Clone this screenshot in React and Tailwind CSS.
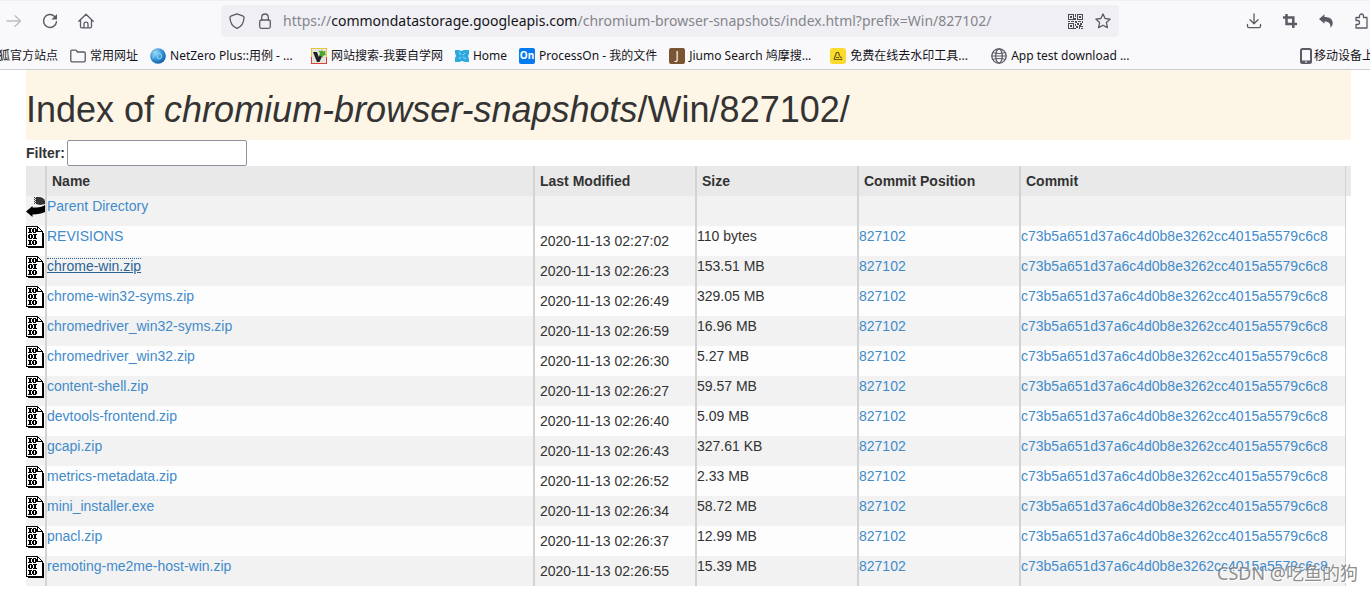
const COMMIT = "c73b5a651d37a6c4d0b8e3262cc4015a5579c6c8";
const POSITION = "827102";

const files = [
  { name: "REVISIONS", modified: "2020-11-13 02:27:02", size: "110 bytes" },
  { name: "chrome-win.zip", modified: "2020-11-13 02:26:23", size: "153.51 MB", active: true },
  { name: "chrome-win32-syms.zip", modified: "2020-11-13 02:26:49", size: "329.05 MB" },
  { name: "chromedriver_win32-syms.zip", modified: "2020-11-13 02:26:59", size: "16.96 MB" },
  { name: "chromedriver_win32.zip", modified: "2020-11-13 02:26:30", size: "5.27 MB" },
  { name: "content-shell.zip", modified: "2020-11-13 02:26:27", size: "59.57 MB" },
  { name: "devtools-frontend.zip", modified: "2020-11-13 02:26:40", size: "5.09 MB" },
  { name: "gcapi.zip", modified: "2020-11-13 02:26:43", size: "327.61 KB" },
  { name: "metrics-metadata.zip", modified: "2020-11-13 02:26:52", size: "2.33 MB" },
  { name: "mini_installer.exe", modified: "2020-11-13 02:26:34", size: "58.72 MB" },
  { name: "pnacl.zip", modified: "2020-11-13 02:26:37", size: "12.99 MB" },
  { name: "remoting-me2me-host-win.zip", modified: "2020-11-13 02:26:55", size: "15.39 MB" },
];

/* ---- icons ---- */

// 16px outline icon in the toolbar grey
function LineIcon({ children, color = "#5b5b66" }) {
  return (
    <svg width="16" height="16" viewBox="0 0 16 16" fill="none" stroke={color} strokeWidth="1.3" strokeLinecap="round" strokeLinejoin="round">
      {children}
    </svg>
  );
}

function ForwardIcon() {
  return <LineIcon color="#bcbcc2"><path d="M1 8h13.5M9 2.8 14.5 8 9 13.2" /></LineIcon>;
}

function HomeIcon() {
  return (
    <LineIcon>
      <path d="M.8 8.2 8 1.2l7.2 7M2.5 6.8v6.7c0 .9.5 1.4 1.4 1.4h8.2c.9 0 1.4-.5 1.4-1.4V6.8M6 14.7v-3.5a2 2 0 0 1 4 0v3.5" />
    </LineIcon>
  );
}

function DownloadIcon() {
  return (
    <LineIcon>
      <path d="M8 .8v9.7M4 6.7l4 4 4-4M1.5 11.5v1.8c0 .8.5 1.3 1.3 1.3h10.4c.8 0 1.3-.5 1.3-1.3v-1.8" />
    </LineIcon>
  );
}

function FolderIcon() {
  return (
    <LineIcon>
      <path d="M.8 3.2c0-.7.4-1.1 1.1-1.1h3.6c.4 0 .7.1.9.4L7.5 4h6.6c.7 0 1.1.4 1.1 1.1v7.6c0 .7-.4 1.1-1.1 1.1H1.9c-.7 0-1.1-.4-1.1-1.1z" />
    </LineIcon>
  );
}

function GlobeIcon() {
  return (
    <LineIcon>
      <circle cx="8" cy="8" r="7.2" />
      <ellipse cx="8" cy="8" rx="3.3" ry="7.2" />
      <path d="M1 8h14M2 4.7c3.5 1 8.500 1 12 0M2 11.3c3.5-1 8.500-1 12 0" strokeWidth="1" />
    </LineIcon>
  );
}

function ShieldIcon() {
  return (
    <LineIcon>
      <path d="M8 .8 14.2 3.2c.6.2.8.6.8 1.2-.1 5-2.3 9-7 11-4.7-2-6.9-6-7-11 0-.6.2-1 .8-1.2z" />
    </LineIcon>
  );
}

function LockIcon() {
  return (
    <LineIcon>
      <rect x="2.7" y="7" width="10.6" height="8.3" rx="1.5" />
      <path d="M4.7 7V4.3a3.3 3.3 0 0 1 6.6 0V7" />
    </LineIcon>
  );
}

function StarIcon() {
  return (
    <LineIcon>
      <path d="m8 .9 2.1 4.6 5.1.6-3.8 3.5 1 5L8 12.2l-4.4 2.4 1-5L.8 6.1l5.1-.6z" />
    </LineIcon>
  );
}

function PuzzleIcon() {
  return (
    <LineIcon>
      <path d="M2 4.5h3.5V3a2 2 0 0 1 4 0v1.5H13V15H2v-3.5h1.5a2 2 0 0 0 0-4H2z" />
    </LineIcon>
  );
}

function ReloadIcon() {
  return (
    <svg width="16" height="16" viewBox="0 0 16 16" fill="none">
      <path d="M12.6 3.4A6.5 6.5 0 1 0 14.5 8.6" stroke="#5b5b66" strokeWidth="1.4" strokeLinecap="round" />
      <path d="M15 1v5.6H9.4z" fill="#5b5b66" />
    </svg>
  );
}

function QrIcon() {
  return (
    <svg width="15" height="15" viewBox="0 0 15 15" fill="#4a4a55" shapeRendering="crispEdges">
      <path fillRule="evenodd" d="M0 0h6v6H0zM1 1v4h4V1zM9 0h6v6H9zM10 1v4h4V1zM0 9h6v6H0zM1 10v4h4v-4z" />
      <path d="M2 2h2v2H2zM11 2h2v2h-2zM2 11h2v2H2zM7 0h1v3H7zM6 4h2v2H6zM0 7h2v1H0zM3 7h3v1H3zM7 7h2v2H7zM10 7h3v1h-3zM14 7h1v2h-1zM7 10h1v2H7zM9 9h2v2H9zM12 9h2v2h-2zM11 11h2v2h-2zM8 12h2v2H8zM11 13h1v2h-1zM13 12h2v1h-2zM13 14h2v1h-2zM6 14h2v1H6z" />
    </svg>
  );
}

function CropIcon() {
  return (
    <svg width="14" height="14" viewBox="0 0 14 14" fill="none" stroke="#5b5b66" strokeWidth="2.5">
      <path d="M3.5 0v10H14M0 3.5h10.3V14" />
    </svg>
  );
}

function UndoIcon() {
  return (
    <svg width="14" height="14" viewBox="0 0 14 14" fill="#5b5b66">
      <path d="M0 5 5.5.3V3C10.5 3 13.7 5 13.7 9c0 2-.9 3.6-2.4 4.7C12 10 10 7.5 5.5 7.5v2.3z" />
    </svg>
  );
}

function SwirlIcon() {
  return (
    <svg width="16" height="16" viewBox="0 0 16 16">
      <defs>
        <radialGradient id="swirl" cx="35%" cy="30%" r="75%">
          <stop offset="0" stopColor="#a9dcf5" />
          <stop offset="0.5" stopColor="#3d9bd8" />
          <stop offset="1" stopColor="#0f5ba8" />
        </radialGradient>
      </defs>
      <circle cx="8" cy="8" r="7.8" fill="url(#swirl)" />
      <path d="M3 10c0-4 4-6 7-4.5 2.5 1.3 2 5-.6 5.3-2 .2-2.9-2-1.4-2.9" fill="none" stroke="#7fcdf2" strokeWidth="1.2" strokeLinecap="round" />
    </svg>
  );
}

function VineIcon() {
  return (
    <svg width="16" height="16" viewBox="0 0 16 16">
      <rect x=".5" y=".5" width="15" height="15" fill="#e4e4e0" stroke="#e0403a" />
      <path d="M.5 9V.5h15V9" fill="none" stroke="#e8c93c" />
      <path d="M2 4h4l1.8 5L10 5l2 1-3.500 8H6z" fill="#222" />
      <path d="m7.5 2.5 2.5.5L11 2l1 1.5 2.5-.5-.5 2 1 2-2.5.5L11 10l-1-2-2-.5 1-2z" fill="#4fa62c" />
    </svg>
  );
}

function NodesIcon() {
  return (
    <svg width="14" height="14" viewBox="0 0 14 14">
      <path d="M0 1h4l2 1 3-1h5v4l-1 2 1 3v3h-4l-3-1-3 1H0V9l1-2-1-3z" fill="#2fa8df" />
      <path d="m4 3 2 3M10 4 8 6M4 10l2-2M11 10 8 8" stroke="#9bdaf5" strokeWidth="1" />
    </svg>
  );
}

function BellIcon() {
  return (
    <svg width="16" height="16" viewBox="0 0 16 16">
      <rect width="16" height="16" rx="3" fill="#fadb2d" />
      <path d="M4 11.5 6.5 4.5h2L9.5 8M6 9.5h3M4 11.5h8.5M9.5 8.5l2.5 1.5" fill="none" stroke="#6b5c10" strokeWidth="1.2" />
    </svg>
  );
}

function PhoneIcon() {
  return (
    <svg width="12" height="16" viewBox="0 0 12 16">
      <rect x="1" y="1" width="10" height="14" rx="1.5" fill="none" stroke="#5b5b66" strokeWidth="2" />
      <path d="M1 12.5h10V15H1z" fill="#5b5b66" />
      <path d="M5 14h2" stroke="#f9f9fb" />
    </svg>
  );
}

function BinaryIcon() {
  return (
    <svg className="block" width="19" height="22" viewBox="0 0 19 22" shapeRendering="crispEdges">
      <path d="M2 2h10l6 6v14H2z" fill="#000" />
      <path d="M0 0h12v1h1v1h1v1h1v1h1v1h1v16H0z" fill="#000" />
      <path d="M1 1h10v5h5v14H1z" fill="#fff" />
      <path d="M12 2h1v1h1v1h1v1h-3z" fill="#fff" />
      <g fill="#000" fillRule="evenodd">
        <path d="M2 2h4v1H5v3h1v1H2V6h1V3H2zM7 2h3v1h1v3h-1v1H7V6H6V3h1zM8 3v3h1V3z" />
        <path d="M3 8h3v1h1v3H6v1H3v-1H2V9h1zM4 9v3h1V9zM7 8h4v1h-1v3h1v1H7v-1h1V9H7z" />
        <path d="M2 14h4v1H5v3h1v1H2v-1h1v-3H2zM7 14h3v1h1v3h-1v1H7v-1H6v-3h1zM8 15v3h1v-3z" />
      </g>
    </svg>
  );
}

function BackIcon() {
  return (
    <svg className="block" width="19" height="22" viewBox="0 0 19 22">
      <path d="M10 1h3c3 0 5 1.500 6 4v3l-5 1-4-1z" fill="#333" />
      <path d="M8 1h1v1H8zM9 2h1v1H9zM8 3h1v1H8zM9 4h1v1H9zM8 5h1v1H8zM9 6h1v1H9zM8 7h1v1H8z" fill="#333" />
      <path d="M0 15.5 6.5 10v1.5H10c4 0 7-1 9-2.5v7c-3 1.500-7 2.500-12.500 2.500V21z" fill="#000" />
    </svg>
  );
}

/* ---- browser chrome ---- */

function ToolButton({ label, children }) {
  return (
    <button type="button" aria-label={label} className="flex h-8 w-9 shrink-0 items-center justify-center">
      {children}
    </button>
  );
}

function AddressButton({ label, children }) {
  return (
    <button type="button" aria-label={label} className="flex h-8 w-7 shrink-0 items-center justify-center">
      {children}
    </button>
  );
}

// long titles are cut to a common width
function Bookmark({ icon, long, children }) {
  return (
    <a href="#" className={`flex shrink-0 items-center gap-1 whitespace-nowrap ${long ? "w-[149px]" : ""}`}>
      {icon}
      <span>{children}</span>
    </a>
  );
}

function BrowserBar() {
  return (
    <header className="overflow-hidden border-b border-[#cccccc] bg-[#f9f9fb] font-['Noto_Sans','Noto_Sans_CJK_SC',sans-serif] text-[#15141a]">
      <div className="-mr-[10px] -ml-1 flex items-center border-t border-[#f0f0f4] pt-1">
        <ToolButton label="Forward"><ForwardIcon /></ToolButton>
        <ToolButton label="Reload"><ReloadIcon /></ToolButton>
        <ToolButton label="Home"><HomeIcon /></ToolButton>
        <div className="mx-[117px] flex h-8 min-w-0 flex-1 items-center rounded bg-[#f0f0f4] px-0.5">
          <AddressButton label="Tracking protection"><ShieldIcon /></AddressButton>
          <AddressButton label="Site security"><LockIcon /></AddressButton>
          <p className="min-w-0 flex-1 truncate pl-1 text-sm text-[#85858c]">
            https://<span className="text-[#15141a]">commondatastorage.googleapis.com</span>/chromium-browser-snapshots/index.html?prefix=Win/827102/
          </p>
          <AddressButton label="QR code"><QrIcon /></AddressButton>
          <AddressButton label="Bookmark this page"><StarIcon /></AddressButton>
        </div>
        <ToolButton label="Downloads"><DownloadIcon /></ToolButton>
        <ToolButton label="Screenshot"><CropIcon /></ToolButton>
        <ToolButton label="Undo"><UndoIcon /></ToolButton>
        <ToolButton label="Extensions"><PuzzleIcon /></ToolButton>
      </div>

      <nav className="-mr-1 -ml-0.5 flex h-8 items-center gap-3 pt-1.5 text-xs">
        <Bookmark>狐官方站点</Bookmark>
        <Bookmark icon={<FolderIcon />}>常用网址</Bookmark>
        <Bookmark long icon={<SwirlIcon />}>NetZero Plus::用例 - ...</Bookmark>
        <Bookmark icon={<VineIcon />}>网站搜索-我要自学网</Bookmark>
        <Bookmark icon={<NodesIcon />}>Home</Bookmark>
        <Bookmark icon={<span className="flex size-4 items-center justify-center rounded-xs bg-[#067bef] text-[10px] font-bold text-white">On</span>}>
          ProcessOn - 我的文件
        </Bookmark>
        <Bookmark long icon={<span className="flex size-4 items-center justify-center rounded-xs bg-[#7b5431] text-xs text-white">J</span>}>
          Jiumo Search 鸠摩搜...
        </Bookmark>
        <Bookmark long icon={<BellIcon />}>免费在线去水印工具...</Bookmark>
        <Bookmark long icon={<GlobeIcon />}>App test download ...</Bookmark>
        <a href="#" className="ml-auto flex shrink-0 items-center gap-0.5 whitespace-nowrap">
          <PhoneIcon />
          <span>移动设备上</span>
        </a>
      </nav>
    </header>
  );
}

/* ---- listing ---- */

function Th({ children }) {
  return <th scope="col" className="border-r-2 border-[#d3d3d3] px-[5px] text-left font-bold">{children}</th>;
}

function Td({ children }) {
  return <td className="border-r-2 border-[#d3d3d3] p-0 align-top">{children}</td>;
}

function FileRow({ file }) {
  return (
    <tr className="h-[30px] odd:bg-[#f2f2f2] even:bg-[#fdfdfd]">
      <Td><BinaryIcon /></Td>
      <Td>
        <a
          href="#"
          className={file.active ? "inline-block border-t border-dotted border-[#2a6496] leading-[14px] text-[#2a6496] underline" : "text-[#428bca]"}
        >
          {file.name}
        </a>
      </Td>
      <td className="border-r-2 border-[#d3d3d3] px-[5px]">{file.modified}</td>
      <Td>{file.size}</Td>
      <Td><a href="#" className="text-[#428bca]">{POSITION}</a></Td>
      <td className="border-r border-[#d3d3d3] p-0 align-top">
        <a href="#" className="text-[#428bca]">{COMMIT}</a>
      </td>
      <td className="bg-white p-0" />
    </tr>
  );
}

export default function App() {
  return (
    <div className="relative bg-white font-['Liberation_Sans',Arial,sans-serif] text-sm text-[#333333]">
      <BrowserBar />

      <main className="pr-[19px] pb-[5px] pl-[26px]">
        <h1 className="bg-[#fdf5e6] pt-5 pb-[10px] text-4xl">
          Index of <em>chromium-browser-snapshots</em>/Win/827102/
        </h1>

        <div className="flex items-center gap-0.5">
          <label htmlFor="filter" className="font-bold">Filter:</label>
          <input id="filter" type="text" className="h-[26px] w-[180px] rounded-xs border border-[#8f8f9d] bg-white px-1" />
        </div>

        <table className="w-full table-fixed border-separate border-spacing-0 leading-5">
          <colgroup>
            <col className="w-[21px]" />
            <col />
            <col className="w-[162px]" />
            <col className="w-[162px]" />
            <col className="w-[162px]" />
            <col className="w-[325px]" />
            <col className="w-[5px]" />
          </colgroup>
          <thead>
            <tr className="h-[30px] bg-[#e9e9e9]">
              <Th />
              <Th>Name</Th>
              <Th>Last Modified</Th>
              <Th>Size</Th>
              <Th>Commit Position</Th>
              <th scope="col" className="border-r border-[#d3d3d3] px-[5px] text-left font-bold">Commit</th>
              <td className="p-0" />
            </tr>
          </thead>
          <tbody>
            <tr className="h-[30px] bg-[#f2f2f2]">
              <Td><BackIcon /></Td>
              <Td><a href="#" className="text-[#428bca]">Parent Directory</a></Td>
              <Td />
              <Td />
              <Td />
              <td className="border-r border-[#d3d3d3] p-0" />
              <td className="bg-white p-0" />
            </tr>
            {files.map((file) => (
              <FileRow key={file.name} file={file} />
            ))}
          </tbody>
        </table>
      </main>

      <p className="absolute right-3 bottom-1 font-['Noto_Sans','Noto_Sans_CJK_SC',sans-serif] text-lg leading-7 text-[#808080]/90 [text-shadow:1px_1px_0_#ffffff]">
        CSDN @吃鱼的狗
      </p>
    </div>
  );
}
